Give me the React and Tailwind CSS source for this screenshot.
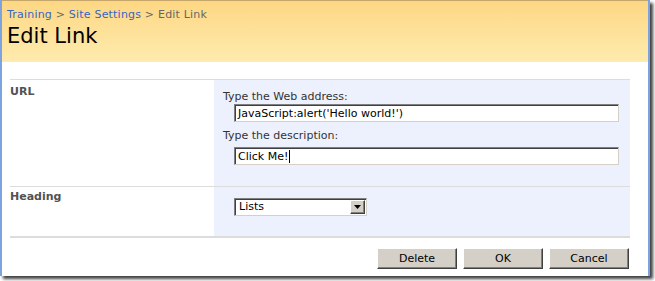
import React from "react";

const font = { fontFamily: '"DejaVu Sans", Verdana, sans-serif' };

const sunken =
  "border border-t-[#7f7f7f] border-l-[#7f7f7f] border-r-[#d4d0c8] border-b-[#d4d0c8] shadow-[inset_1px_1px_0_#404040] bg-white";

const raised =
  "border border-t-white border-l-white border-r-[#404040] border-b-[#404040] shadow-[inset_-1px_-1px_0_#808080] bg-[#d4d0c8]";

const Button = ({ children }) => (
  <button className={`${raised} w-[80px] h-[21px] text-[11px] text-black leading-none`}>
    {children}
  </button>
);

export default function App() {
  return (
    <div className="w-[655px] h-[281px] bg-white overflow-hidden" style={font}>
      <div className="w-[650px] h-[276px] flex flex-col bg-white border-l-2 border-r-2 border-[#7da2e0] shadow-[3px_3px_3px_rgba(0,0,0,0.75)]">
        {/* title area */}
        <div className="h-[62px] border-t border-[#c4a56a] bg-gradient-to-b from-[#fdd783] to-[#feebae] pl-[5px] pt-[7px]">
          <div className="text-[11px] leading-[13px] text-[#666666] tracking-[0.2px]">
            <a className="text-[#3863c6]">Training</a>
            <span> &gt; </span>
            <a className="text-[#3863c6]">Site Settings</a>
            <span> &gt; Edit Link</span>
          </div>
          <h1 className="text-[21px] leading-[26px] text-black mt-[2px]">Edit Link</h1>
        </div>

        {/* form */}
        <div className="ml-[8px] w-[620px] mt-[17px] border-t border-[#dcdcdc]">
          <div className="grid grid-cols-[204px_1fr] h-[107px] border-b border-[#dcdcdc]">
            <div className="pt-[5px] text-[11px] leading-[13px] font-bold text-[#525252]">URL</div>
            <div className="bg-[#edf1fd] pl-[9px] pt-[10px] text-[11px] leading-[13px] text-[#333]">
              <div>Type the Web address:</div>
              <div className={`${sunken} ml-[11px] mt-[1px] w-[385px] h-[18px] px-[3px] flex items-center text-black`}>
                JavaScript:alert('Hello world!')
              </div>
              <div className="mt-[7px]">Type the description:</div>
              <div className={`${sunken} ml-[11px] mt-[5px] w-[385px] h-[18px] px-[3px] flex items-center text-black`}>
                Click Me!
                <span className="inline-block w-[1px] h-[13px] bg-black ml-[1px]" />
              </div>
            </div>
          </div>
          <div className="grid grid-cols-[204px_1fr] h-[51px] border-b-2 border-[#dcdcdc]">
            <div className="pt-[3px] text-[11px] leading-[13px] font-bold text-[#525252]">Heading</div>
            <div className="bg-[#edf1fd] pl-[20px] pt-[11px]">
              <div className={`${sunken} w-[133px] h-[18px] flex items-center text-[11px] text-black`}>
                <span className="flex-1 pl-[4px]">Lists</span>
                <span className={`${raised} w-[15px] h-[14px] mr-[1px] flex items-center justify-center`}>
                  <svg width="7" height="4" viewBox="0 0 7 4">
                    <path d="M0 0h7L3.5 4z" fill="#000" />
                  </svg>
                </span>
              </div>
            </div>
          </div>
          <div className="flex justify-end gap-[6px] mt-[10px] pr-[1px]">
            <Button>Delete</Button>
            <Button>OK</Button>
            <Button>Cancel</Button>
          </div>
        </div>
      </div>
    </div>
  );
}
